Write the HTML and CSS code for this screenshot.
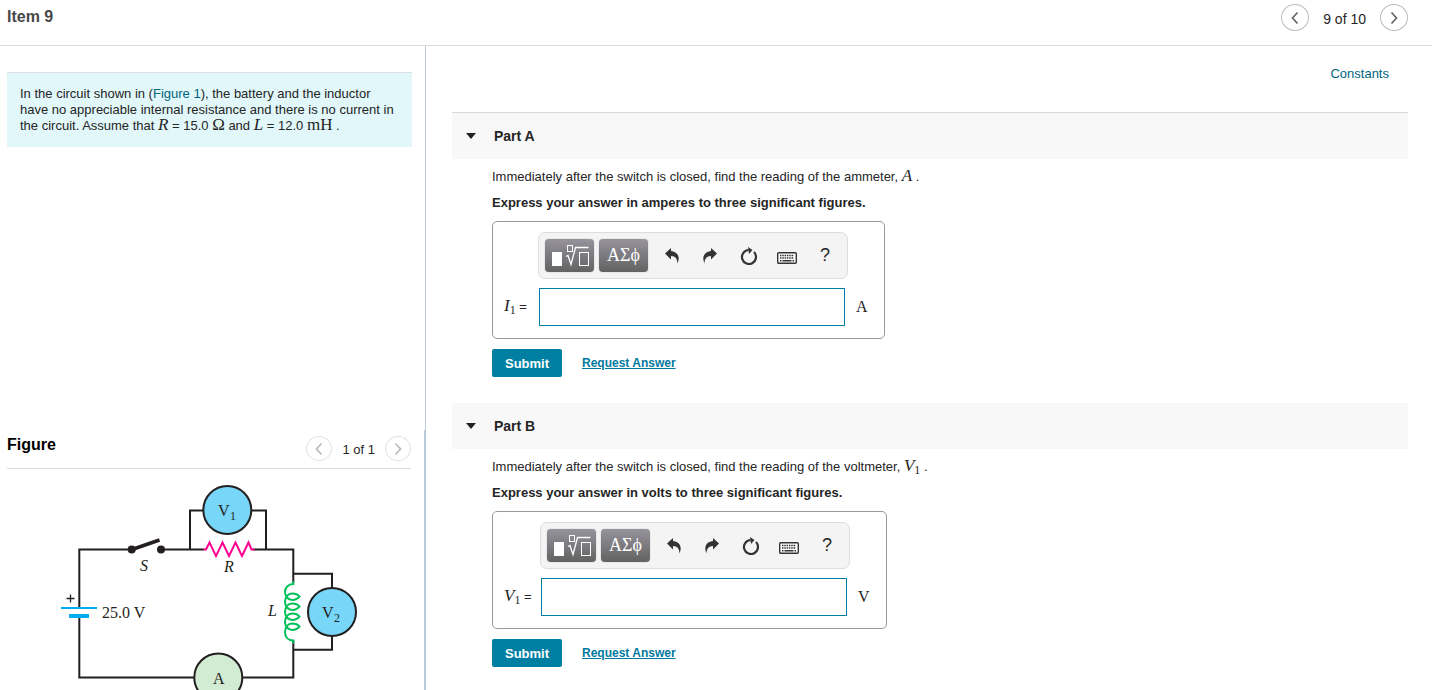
FILE: index.html
```html
<!DOCTYPE html>
<html lang="en">
<head>
  <meta charset="UTF-8">
  <title>Item 9</title>
  <link rel="stylesheet" href="styles.css">
</head>
<body>
  <!-- shared toolbar icons -->
  <svg class="sprite" aria-hidden="true">
    <symbol id="i-root" viewBox="0 0 38 22">
      <rect x="1" y="7" width="10" height="14" fill="#fff"/>
      <rect x="16.5" y=".5" width="5" height="6" fill="none" stroke="#fff"/>
      <path d="M15 11.500l2-1 3 9 4.500-17h13" fill="none" stroke="#fff" stroke-width="1.300"/>
      <rect x="28.500" y="7.500" width="9" height="13" fill="none" stroke="#fff"/>
    </symbol>
    <symbol id="i-undo" viewBox="0 0 14 16">
      <path d="M6 0v3c5 .5 10 4 6.500 12.500C12.500 11 10.500 8 6 8v3.500L0 5.500z" fill="#333"/>
    </symbol>
    <symbol id="i-reset" viewBox="0 0 18 18">
      <path d="M14 5.100A7 7 0 1 1 8.500 3" fill="none" stroke="#333" stroke-width="2.200"/>
      <path d="M8 0l4.500 3L9 7z" fill="#333"/>
    </symbol>
    <symbol id="i-keys" viewBox="0 0 20 12">
      <rect x=".7" y=".7" width="18.600" height="10.600" rx="1" fill="#fff" stroke="#333" stroke-width="1.400"/>
      <path d="M3 3.500h14M3 6h14" stroke="#333" stroke-width="1.600" stroke-dasharray="1.500 .8"/>
      <path d="M3 8.700h1.500M5.500 8.700h9M15.500 8.700H17" stroke="#333" stroke-width="1.500"/>
    </symbol>
    <symbol id="i-prev" viewBox="0 0 8 14">
      <path d="M6.500 1.500L1.500 7l5 5.500" fill="none" stroke="currentColor" stroke-width="1.700"/>
    </symbol>
    <symbol id="i-next" viewBox="0 0 8 14">
      <path d="M1.500 1.500L6.500 7l-5 5.500" fill="none" stroke="currentColor" stroke-width="1.700"/>
    </symbol>
  </svg>

  <header class="top-bar">
    <h1>Item 9</h1>
    <nav class="pager">
      <button type="button" aria-label="Previous item"><svg><use href="#i-prev"/></svg></button>
      <span>9 of 10</span>
      <button type="button" aria-label="Next item"><svg><use href="#i-next"/></svg></button>
    </nav>
  </header>

  <div class="columns">
    <aside class="left">
      <div class="problem">
        <p>In the circuit shown in (<a href="#figure">Figure 1</a>), the battery and the inductor have no appreciable internal resistance and there is no current in the circuit. Assume that <i class="math">R</i> = 15.0 <span class="math">Ω</span> and <i class="math">L</i> = 12.0 <span class="math">mH</span> .</p>
      </div>

      <section class="figure" id="figure">
        <div class="figure-head">
          <h2>Figure</h2>
          <nav class="pager small">
            <button type="button" aria-label="Previous figure" disabled><svg><use href="#i-prev"/></svg></button>
            <span>1 of 1</span>
            <button type="button" aria-label="Next figure" disabled><svg><use href="#i-next"/></svg></button>
          </nav>
        </div>
        <svg class="circuit" viewBox="0 0 340 240" role="img" aria-label="Circuit diagram">
          <!-- wires -->
          <g fill="none" stroke="#231f20" stroke-width="2">
            <path d="M92 74.500H39.300V132M39.300 142v60.500H253.300V165"/>
            <path d="M121 74.500h43M213 74.500h40.300V108"/>
            <path d="M150 74.500V35.500h76v39"/>
            <path d="M253.300 98.700H292v76h-38.700"/>
          </g>
          <!-- switch -->
          <circle cx="91.700" cy="74.500" r="4" fill="#231f20"/>
          <circle cx="121" cy="74.500" r="4" fill="#231f20"/>
          <path d="M92 74.500L119.500 65" stroke="#231f20" stroke-width="3.500"/>
          <!-- battery -->
          <path d="M21 133h36" stroke="#00aeef" stroke-width="2"/>
          <path d="M29 141h20" stroke="#00aeef" stroke-width="4"/>
          <path d="M26.500 123.500h8M30.500 119.500v8" stroke="#231f20" stroke-width="1.300"/>
          <!-- resistor and inductor -->
          <path d="M163.500 74.500h2.500l3.500-7 6.500 13.500 6.500-13.500 6.500 13.500 6.500-13.500 6.500 13.500 6.500-13.500 3 7h3" fill="none" stroke="#ff0090" stroke-width="2"/>
          <path d="M253.300 106v3C248 109 245 113 245 117
            C245 121 248 125 252 125S259 122.500 259.500 121.500C258 119.500 255 118.500 252 118.500C248 118.500 245 122 245 127
            C245 131 248 135 252 135S259 132.500 259.500 131.500C258 129.500 255 128.500 252 128.500C248 128.500 245 132 245 137
            C245 141 248 145 252 145S259 142.500 259.500 141.500C258 139.500 255 138.500 252 138.500C248 138.500 245 142 245 147
            C245 151 248 155 252 155S259 152.500 259.500 151.500C258 149.500 255 148.500 252 148.500C248 148.500 245 152 245 157
            C245 162 248 165.500 253.300 165.500v3" fill="none" stroke="#00c05a" stroke-width="2"/>
          <!-- meters -->
          <g stroke="#231f20" stroke-width="2">
            <circle cx="187.300" cy="35" r="24" fill="#78d6f9"/>
            <circle cx="292" cy="137" r="24" fill="#78d6f9"/>
            <circle cx="178.300" cy="202.500" r="24" fill="#d2ecd4"/>
          </g>
          <g class="circuit-text">
            <text x="178" y="41">V</text><text class="sub" x="190" y="45">1</text>
            <text x="282" y="143">V</text><text class="sub" x="294" y="147">2</text>
            <text x="173" y="209">A</text>
            <text x="62" y="143">25.0 V</text>
            <text class="it" x="100" y="96">S</text>
            <text class="it" x="184" y="97">R</text>
            <text class="it" x="228" y="141">L</text>
          </g>
        </svg>
      </section>
    </aside>

    <main class="right">
      <div class="links"><a href="#constants">Constants</a></div>

      <section class="part">
        <h2 class="part-head"><button type="button" aria-expanded="true">Part A</button></h2>
        <div class="part-body">
          <p>Immediately after the switch is closed, find the reading of the ammeter, <i class="math">A</i> .</p>
          <p class="express">Express your answer in amperes to three significant figures.</p>
          <div class="answer">
            <div class="toolbar">
              <button type="button" class="dark" aria-label="Templates"><svg class="root"><use href="#i-root"/></svg></button>
              <button type="button" class="dark greek">ΑΣϕ</button>
              <button type="button" class="tool" aria-label="Undo"><svg class="undo"><use href="#i-undo"/></svg></button>
              <button type="button" class="tool" aria-label="Redo"><svg class="undo flip"><use href="#i-undo"/></svg></button>
              <button type="button" class="tool" aria-label="Reset"><svg class="reset"><use href="#i-reset"/></svg></button>
              <button type="button" class="tool" aria-label="Keyboard shortcuts"><svg class="keys"><use href="#i-keys"/></svg></button>
              <button type="button" class="tool">?</button>
            </div>
            <label for="ans-a"><i class="math">I</i><sub>1</sub> =</label>
            <input type="text" id="ans-a">
            <span class="unit">A</span>
          </div>
          <div class="actions">
            <button type="submit" class="submit">Submit</button>
            <a href="#answer-a">Request Answer</a>
          </div>
        </div>
      </section>

      <section class="part">
        <h2 class="part-head"><button type="button" aria-expanded="true">Part B</button></h2>
        <div class="part-body">
          <p>Immediately after the switch is closed, find the reading of the voltmeter, <i class="math">V</i><sub>1</sub> .</p>
          <p class="express">Express your answer in volts to three significant figures.</p>
          <div class="answer wide">
            <div class="toolbar">
              <button type="button" class="dark" aria-label="Templates"><svg class="root"><use href="#i-root"/></svg></button>
              <button type="button" class="dark greek">ΑΣϕ</button>
              <button type="button" class="tool" aria-label="Undo"><svg class="undo"><use href="#i-undo"/></svg></button>
              <button type="button" class="tool" aria-label="Redo"><svg class="undo flip"><use href="#i-undo"/></svg></button>
              <button type="button" class="tool" aria-label="Reset"><svg class="reset"><use href="#i-reset"/></svg></button>
              <button type="button" class="tool" aria-label="Keyboard shortcuts"><svg class="keys"><use href="#i-keys"/></svg></button>
              <button type="button" class="tool">?</button>
            </div>
            <label for="ans-b"><i class="math">V</i><sub>1</sub> =</label>
            <input type="text" id="ans-b">
            <span class="unit">V</span>
          </div>
          <div class="actions">
            <button type="submit" class="submit">Submit</button>
            <a href="#answer-b">Request Answer</a>
          </div>
        </div>
      </section>
    </main>
  </div>
</body>
</html>
```
FILE: styles.css
```css
* {
  margin: 0;
  padding: 0;
  box-sizing: border-box;
}

body {
  height: 100vh;
  display: flex;
  flex-direction: column;
  overflow: hidden;
  background: #fff;
  color: #252525;
  font-family: "Liberation Sans", Arial, sans-serif;
  font-size: 13px;
  line-height: 16px;
}

button {
  font-family: inherit;
  color: inherit;
  border: none;
  background: none;
  cursor: pointer;
}

a {
  color: #006580;
  text-decoration: none;
}

.sprite {
  position: absolute;
  width: 0;
  height: 0;
}

.math {
  font-family: "Liberation Serif", serif;
  font-size: 17px;
  line-height: 0;
}

sub {
  font-family: "Liberation Serif", serif;
  font-size: 12px;
  line-height: 0;
  vertical-align: -3px;
}

/* Top bar */
.top-bar {
  display: flex;
  justify-content: space-between;
  flex: none;
  height: 46px;
  padding: 4px 24px 0 7px;
  border-bottom: 1px solid #dcdcdc;
}

.top-bar h1 {
  font-size: 16px;
  line-height: 25px;
  color: #484848;
}

.pager {
  display: flex;
  align-items: center;
  gap: 14px;
  height: 27px;
  font-size: 14px;
}

.pager span {
  padding-top: 3px;
}

.pager button {
  display: flex;
  align-items: center;
  justify-content: center;
  width: 28px;
  height: 27px;
  border: 1px solid #bbb;
  border-radius: 50%;
  color: #666;
}

.pager svg {
  width: 8px;
  height: 14px;
}

.pager.small {
  gap: 10px;
  height: 25px;
  font-size: 13px;
}

.pager.small button {
  width: 26px;
  height: 25px;
  border-color: #e2e2e2;
  color: #bbb;
}

/* Columns */
.columns {
  display: flex;
  flex: 1;
  min-height: 0;
}

.left {
  display: flex;
  flex-direction: column;
  flex: none;
  width: 426px;
}

.problem {
  flex: 1;
  min-height: 0;
  padding: 26px 13px 0 7px;
  border-right: 1px solid #c0c9da;
}

.problem p {
  padding: 13px 12px 13px 13px;
  border-top: 1px solid #d8dfdf;
  background: #e1f7f9;
}

.figure {
  flex: none;
  height: 260px;
  padding: 0 13px 0 7px;
  border-right: 2px solid #b9cbdc;
  overflow: hidden;
}

.figure-head {
  display: flex;
  justify-content: space-between;
  height: 39px;
  padding-top: 6px;
  border-bottom: 1px solid #dcdcdc;
}

.figure-head h2 {
  font-size: 16px;
  line-height: 18px;
  color: #000;
}

.circuit {
  display: block;
  width: 340px;
  height: 240px;
  margin: 6px 0 0 33px;
}

.circuit-text {
  font-family: "Liberation Serif", serif;
  font-size: 16px;
  fill: #231f20;
}

.circuit-text .sub {
  font-size: 12px;
}

.circuit-text .it {
  font-style: italic;
}

/* Parts */
.right {
  flex: 1;
  min-width: 0;
  padding: 20px 24px 0 26px;
}

.links {
  height: 46px;
  padding-right: 19px;
  text-align: right;
}

.part + .part {
  margin-top: 26px;
}

.part-head {
  height: 46px;
  background: #f8f8f8;
  font-size: 14px;
}

.part:nth-of-type(1) .part-head {
  height: 47px;
  border-top: 1px solid #d8d8d8;
}

.part-head button {
  display: flex;
  align-items: center;
  gap: 18px;
  height: 46px;
  padding-left: 14px;
  font-size: 14px;
  font-weight: bold;
}

.part-head button::before {
  content: "";
  border: 5px solid transparent;
  border-top: 6px solid #222;
  border-bottom: none;
}

.part-body {
  padding: 10px 0 0 40px;
}

.part-body p {
  height: 16px;
  margin-bottom: 10px;
}

.part-body .express {
  font-weight: bold;
}

.answer {
  display: inline-grid;
  grid-template-columns: 34px 310px auto;
  align-items: center;
  row-gap: 9px;
  height: 118px;
  padding: 10px 16px 12px 11px;
  border: 1px solid #999;
  border-radius: 5px;
  vertical-align: top;
}

.answer.wide {
  grid-template-columns: 36px 310px auto;
}

.toolbar {
  grid-column: 2;
  display: flex;
  align-items: center;
  height: 47px;
  padding: 0 3px 0 6px;
  border: 1px solid #ddd;
  border-radius: 7px;
  background: #f4f4f4;
}

.toolbar button {
  display: flex;
  align-items: center;
  justify-content: center;
}

.dark {
  width: 49px;
  height: 33px;
  margin-right: 5px;
  border-radius: 4px;
  background: linear-gradient(#96939c, #626262);
  color: #fff;
  box-shadow: 0 0 1px #777;
}

.greek {
  font-family: "Liberation Serif", serif;
  font-size: 18px;
}

.tool {
  flex: 1;
  font-size: 18px;
}

.root {
  width: 38px;
  height: 22px;
}

.undo {
  width: 14px;
  height: 16px;
}

.flip {
  transform: scaleX(-1);
}

.reset {
  width: 18px;
  height: 18px;
}

.keys {
  width: 20px;
  height: 12px;
  margin-top: 4px;
}

.answer label {
  grid-column: 1;
}

.answer input {
  width: 306px;
  height: 38px;
  margin-left: 1px;
  padding: 0 8px;
  border: 1px solid #007fa3;
  font-size: 16px;
}

.unit {
  padding-left: 8px;
  font-family: "Liberation Serif", serif;
  font-size: 16px;
}

.actions {
  display: flex;
  align-items: center;
  gap: 20px;
  margin-top: 10px;
}

.submit {
  width: 70px;
  height: 28px;
  border-radius: 2px;
  background: #007fa3;
  color: #fff;
  font-size: 13px;
  font-weight: bold;
}

.actions a {
  font-size: 12px;
  font-weight: bold;
  color: #0079a0;
  text-decoration: underline;
}
```
